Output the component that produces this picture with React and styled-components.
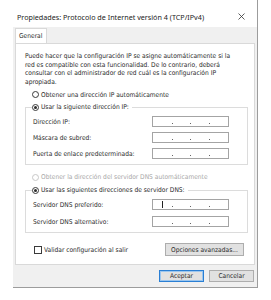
import React from "react";
import styled, { createGlobalStyle } from "styled-components";

const GlobalStyle = createGlobalStyle`
  html, body {
    margin: 0;
    padding: 0;
    background: #ffffff;
  }
  body {
    font-family: "DejaVu Sans Condensed", "DejaVu Sans", sans-serif;
    font-stretch: condensed;
    font-size: 6.6px;
    color: #2b2b2b;
  }
  * {
    box-sizing: border-box;
  }
`;

const Window = styled.div`
  margin-left: 13px;
  width: 245px;
  height: 288px;
  display: flex;
  flex-direction: column;
  border-right: 1px solid #9c9c9c;
  border-bottom: 1px solid #9c9c9c;
`;

const TitleBar = styled.div`
  height: 27px;
  padding: 6px 0 0 4px;
  display: flex;
  align-items: center;
  justify-content: space-between;
  background: #ffffff;
`;

const Title = styled.span`
  font-family: "Noto Sans", "Open Sans", sans-serif;
  font-stretch: normal;
  font-size: 7.2px;
  color: #222;
  white-space: nowrap;
`;

const Close = styled.svg`
  width: 7px;
  height: 7px;
  margin-right: 12px;
`;

const Body = styled.div`
  flex: 1;
  background: #f0f0f0;
  padding: 1px 2px 0 2px;
  display: flex;
  flex-direction: column;
`;

const TabStrip = styled.div`
  display: flex;
  height: 15px;
`;

const Tab = styled.div`
  width: 32px;
  height: 15px;
  margin-bottom: -1px;
  background: #ffffff;
  border: 1px solid #d9d9d9;
  border-bottom: none;
  position: relative;
  z-index: 1;
  padding-left: 3px;
  display: flex;
  align-items: center;
`;

const Panel = styled.div`
  background: #ffffff;
  border: 1px solid #d9d9d9;
  padding: 8px 6px 8px 9px;
  display: flex;
  flex-direction: column;
`;

const Paragraph = styled.p`
  margin: 0;
  line-height: 8.5px;
  white-space: nowrap;
  span {
    display: block;
  }
`;

const RadioRow = styled.label`
  display: flex;
  align-items: center;
  height: 9px;
  gap: 2px;
  margin-top: ${(p) => p.$top || 0}px;
  padding-left: ${(p) => (p.$legend ? 0 : 7)}px;
  color: ${(p) => (p.$disabled ? "#a8a8a8" : "inherit")};
  white-space: nowrap;
`;

const Radio = styled.span`
  width: 7px;
  height: 7px;
  border-radius: 50%;
  border: 1px solid ${(p) => (p.$disabled ? "#c8c8c8" : "#3a3a3a")};
  background: #fff;
  display: flex;
  align-items: center;
  justify-content: center;
  &::after {
    content: "";
    width: 3px;
    height: 3px;
    border-radius: 50%;
    background: ${(p) => (p.$checked ? "#2a2a2a" : "transparent")};
  }
`;

const Group = styled.fieldset`
  margin: ${(p) => p.$top}px 0 0 0;
  padding: 4.5px 18px 5px 7px;
  border: 1px solid #dcdcdc;
  display: flex;
  flex-direction: column;
  gap: ${(p) => p.$gap}px;
  min-width: 0;
`;

const Legend = styled.legend`
  padding: 0 3px 0 0;
  margin-left: -1px;
`;

const FieldRow = styled.div`
  display: grid;
  grid-template-columns: 1fr 77px;
  align-items: center;
  height: 11px;
  white-space: nowrap;
`;

const IpBox = styled.div`
  height: 11px;
  border: 1px solid #a4a4a4;
  background: #fff;
  display: flex;
  align-items: center;
  padding: 0 1px;
`;

const IpField = styled.span`
  flex: 1;
  display: flex;
  justify-content: center;
  align-items: center;
  height: 100%;
`;

const Caret = styled.span`
  width: 1px;
  height: 7px;
  background: #222;
`;

const Dot = styled.span`
  width: 1px;
  height: 1px;
  margin-top: 3px;
  background: #666;
`;

const OptionsRow = styled.div`
  margin-top: 10px;
  height: 13px;
  display: flex;
  align-items: center;
  justify-content: space-between;
  padding: 0 4px 0 9px;
`;

const CheckLabel = styled.label`
  display: flex;
  align-items: center;
  gap: 2px;
  white-space: nowrap;
`;

const Checkbox = styled.span`
  width: 8px;
  height: 8px;
  border: 1px solid #3a3a3a;
  background: #fff;
`;

const Button = styled.button`
  font: inherit;
  color: #2b2b2b;
  width: ${(p) => p.$w}px;
  height: ${(p) => p.$h}px;
  padding: 0;
  background: #e1e1e1;
  border: 1px solid ${(p) => (p.$primary ? "#2a7fd4" : "#adadad")};
  box-shadow: ${(p) => (p.$primary ? "inset 0 0 0 1px #9cc6ee" : "none")};
  white-space: nowrap;
`;

const ButtonBar = styled.div`
  display: flex;
  justify-content: flex-end;
  gap: 5px;
  padding: 4.5px 1px 0 0;
`;

function IpInput({ caret }) {
  return (
    <IpBox>
      <IpField>{caret && <Caret />}</IpField>
      <Dot />
      <IpField />
      <Dot />
      <IpField />
      <Dot />
      <IpField />
    </IpBox>
  );
}

const ipRows = [
  "Dirección IP:",
  "Máscara de subred:",
  "Puerta de enlace predeterminada:",
];

const dnsRows = ["Servidor DNS preferido:", "Servidor DNS alternativo:"];

export default function App() {
  return (
    <>
      <GlobalStyle />
      <Window>
        <TitleBar>
          <Title>Propiedades: Protocolo de Internet versión 4 (TCP/IPv4)</Title>
          <Close viewBox="0 0 7 7">
            <path d="M0.5 0.5 L6.5 6.5 M6.5 0.5 L0.5 6.5" stroke="#333" strokeWidth="0.8" fill="none" />
          </Close>
        </TitleBar>
        <Body>
          <TabStrip>
            <Tab>General</Tab>
          </TabStrip>
          <Panel>
            <Paragraph>
              <span>Puede hacer que la configuración IP se asigne automáticamente si la</span>
              <span>red es compatible con esta funcionalidad. De lo contrario, deberá</span>
              <span>consultar con el administrador de red cuál es la configuración IP</span>
              <span>apropiada.</span>
            </Paragraph>
            <RadioRow $top={4}>
              <Radio />
              Obtener una dirección IP automáticamente
            </RadioRow>
            <Group $top={3.5} $gap={5}>
              <Legend>
                <RadioRow $legend>
                  <Radio $checked />
                  Usar la siguiente dirección IP:
                </RadioRow>
              </Legend>
              {ipRows.map((label) => (
                <FieldRow key={label}>
                  <span>{label}</span>
                  <IpInput />
                </FieldRow>
              ))}
            </Group>
            <RadioRow $top={7.5} $disabled>
              <Radio $disabled />
              Obtener la dirección del servidor DNS automáticamente
            </RadioRow>
            <Group $top={4} $gap={6}>
              <Legend>
                <RadioRow $legend>
                  <Radio $checked />
                  Usar las siguientes direcciones de servidor DNS:
                </RadioRow>
              </Legend>
              {dnsRows.map((label, i) => (
                <FieldRow key={label}>
                  <span>{label}</span>
                  <IpInput caret={i === 0} />
                </FieldRow>
              ))}
            </Group>
            <OptionsRow>
              <CheckLabel>
                <Checkbox />
                Validar configuración al salir
              </CheckLabel>
              <Button $w={79} $h={13}>Opciones avanzadas...</Button>
            </OptionsRow>
          </Panel>
          <ButtonBar>
            <Button $w={45} $h={12} $primary>Aceptar</Button>
            <Button $w={45} $h={12}>Cancelar</Button>
          </ButtonBar>
        </Body>
      </Window>
    </>
  );
}
